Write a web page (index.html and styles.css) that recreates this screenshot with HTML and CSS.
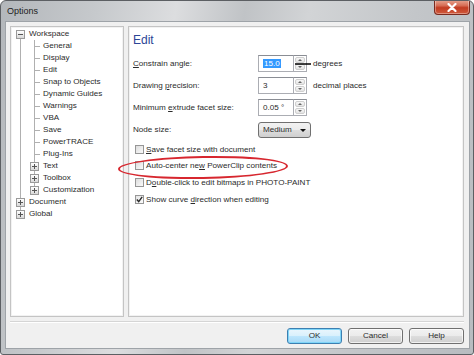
FILE: index.html
```html
<!DOCTYPE html>
<html lang="en">
<head>
    <meta charset="UTF-8">
    <title>Options</title>
    <link rel="stylesheet" href="styles.css">
</head>
<body>
<div class="window">
    <div class="titlebar">
        <span class="title">Options</span>
        <div class="close">
            <svg width="10" height="9" viewBox="0 0 10 9"><path d="M1.5 1 L8.5 8 M8.5 1 L1.5 8" stroke="#fff" stroke-width="2.2" stroke-linecap="round"/></svg>
        </div>
    </div>
    <div class="client">
        <div class="panes">
            <div class="tree">
                <div class="row"><span class="cell down"><i class="box minus"></i></span><span class="label">Workspace</span></div>
                <div class="row"><span class="cell line"></span><span class="cell tee"></span><span class="label">General</span></div>
                <div class="row"><span class="cell line"></span><span class="cell tee"></span><span class="label">Display</span></div>
                <div class="row"><span class="cell line"></span><span class="cell tee"></span><span class="label">Edit</span></div>
                <div class="row"><span class="cell line"></span><span class="cell tee"></span><span class="label">Snap to Objects</span></div>
                <div class="row"><span class="cell line"></span><span class="cell tee"></span><span class="label">Dynamic Guides</span></div>
                <div class="row"><span class="cell line"></span><span class="cell tee"></span><span class="label">Warnings</span></div>
                <div class="row"><span class="cell line"></span><span class="cell tee"></span><span class="label">VBA</span></div>
                <div class="row"><span class="cell line"></span><span class="cell tee"></span><span class="label">Save</span></div>
                <div class="row"><span class="cell line"></span><span class="cell tee"></span><span class="label">PowerTRACE</span></div>
                <div class="row"><span class="cell line"></span><span class="cell tee"></span><span class="label">Plug-Ins</span></div>
                <div class="row"><span class="cell line"></span><span class="cell line"><i class="box plus"></i></span><span class="label">Text</span></div>
                <div class="row"><span class="cell line"></span><span class="cell line"><i class="box plus"></i></span><span class="label">Toolbox</span></div>
                <div class="row"><span class="cell line"></span><span class="cell up"><i class="box plus"></i></span><span class="label">Customization</span></div>
                <div class="row"><span class="cell line"><i class="box plus"></i></span><span class="label">Document</span></div>
                <div class="row"><span class="cell up"><i class="box plus"></i></span><span class="label">Global</span></div>
            </div>
            <div class="page">
                <h1>Edit</h1>
                <div class="fields">
                    <span><u>C</u>onstrain angle:</span>
                    <div class="ctrl">
                        <div class="spin">
                            <div class="field"><span class="selected">15.0</span></div>
                            <div class="arrows"><span class="up"></span><span class="down"></span></div>
                        </div>
                        <span class="unit">degrees</span>
                    </div>
                    <span>Drawing <u>p</u>recision:</span>
                    <div class="ctrl">
                        <div class="spin">
                            <div class="field">3</div>
                            <div class="arrows"><span class="up"></span><span class="down"></span></div>
                        </div>
                        <span class="unit">decimal places</span>
                    </div>
                    <span>Minimum <u>e</u>xtrude facet size:</span>
                    <div class="ctrl">
                        <div class="spin">
                            <div class="field">0.05 °</div>
                            <div class="arrows"><span class="up"></span><span class="down"></span></div>
                        </div>
                    </div>
                    <span>Node size:</span>
                    <div class="ctrl">
                        <div class="select">Medium<span class="caret"></span></div>
                    </div>
                </div>
                <div class="checks">
                    <div class="check"><span class="cb"></span><span><u>S</u>ave facet size with document</span></div>
                    <div class="check"><span class="cb"></span><span>Auto-center ne<u>w</u> PowerClip contents</span></div>
                    <div class="check"><span class="cb"></span><span>D<u>o</u>uble-click to edit bitmaps in PHOTO-PAINT</span></div>
                    <div class="check"><span class="cb checked"><svg width="7" height="7" viewBox="0 0 7 7"><path d="M0.8 3.6 L2.7 5.6 L6.2 0.8" fill="none" stroke="#2a2a2a" stroke-width="1.4"/></svg></span><span>Show curve <u>d</u>irection when editing</span></div>
                </div>
                <div class="ellipse"></div>
                <svg class="cursor" width="18" height="4" viewBox="0 0 18 4">
                    <path d="M1 2 H17" stroke="#000" stroke-width="1.6"/>
                </svg>
            </div>
        </div>
        <div class="sep"></div>
        <div class="buttons">
            <div class="btn default">OK</div>
            <div class="btn">Cancel</div>
            <div class="btn">Help</div>
        </div>
    </div>
</div>
</body>
</html>
```

FILE: styles.css
```css
body {
    margin: 0;
    font-family: "Liberation Sans", Arial, sans-serif;
    font-size: 8.1px;
    color: #2b2b2b;
    background: #fff;
}
.window {
    width: 474px;
    height: 355px;
    box-sizing: border-box;
    border: 1px solid #5c5f63;
    border-radius: 6px 6px 3px 3px;
    background: linear-gradient(100deg, #b3b7bb 0%, #c6c9cc 18%, #dcdddf 33%, #c0c3c6 46%, #d2d4d6 58%, #c3c6c9 78%, #b8bcc0 100%);
    display: flex;
    flex-direction: column;
    overflow: hidden;
}
.titlebar {
    height: 21px;
    flex-shrink: 0;
    display: flex;
    justify-content: space-between;
    align-items: flex-start;
    padding-left: 6px;
}
.title {
    font-size: 9px;
    line-height: 20px;
    color: #1c1c1c;
}
.close {
    width: 36px;
    height: 15px;
    margin: -1px 3px 0 0;
    box-sizing: border-box;
    border: 1px solid #7a2a1e;
    border-top: none;
    border-radius: 0 0 4px 4px;
    background: linear-gradient(#e7a793 0%, #d66d55 40%, #c23c22 55%, #cf5a3c 100%);
    box-shadow: inset 0 0 0 1px rgba(255,255,255,0.35);
    display: flex;
    justify-content: center;
    align-items: center;
}
.client {
    flex: 1;
    margin: 0 4px 6px 5px;
    padding: 4px 5px 0 4px;
    background: #f0f0f0;
    box-shadow: 0 0 0 1px #9ea3a8;
    display: flex;
    flex-direction: column;
}
.panes {
    height: 291px;
    display: flex;
    gap: 4px;
}
.tree {
    width: 114px;
    box-sizing: border-box;
    border: 1px solid #c4c4c4;
    box-shadow: inset 0 0 0 1px #f2f2f2;
    background: #fff;
    padding-top: 1px;
}
.row {
    display: flex;
    height: 12px;
    padding-left: 4px;
}
.label {
    line-height: 12px;
    white-space: nowrap;
}
.cell {
    width: 11px;
    height: 12px;
    margin-right: 3px;
    display: flex;
    align-items: center;
    padding-left: 1px;
    box-sizing: border-box;
    flex-shrink: 0;
}
.cell.line {
    background: linear-gradient(#b0b0b0, #b0b0b0) 5px 0 / 1px 100% no-repeat;
}
.cell.tee {
    background: linear-gradient(#b0b0b0, #b0b0b0) 5px 0 / 1px 100% no-repeat,
                linear-gradient(#b0b0b0, #b0b0b0) 5px 6px / 6px 1px no-repeat;
}
.cell.down {
    background: linear-gradient(#b0b0b0, #b0b0b0) 5px 6px / 1px 6px no-repeat;
}
.cell.up {
    background: linear-gradient(#b0b0b0, #b0b0b0) 5px 0 / 1px 6px no-repeat;
}
.box {
    display: block;
    width: 7px;
    height: 7px;
    border: 1px solid #9a9a9a;
    background: linear-gradient(#555, #555) 1px 3px / 5px 1px no-repeat,
                linear-gradient(#ffffff, #d8d8d8);
}
.box.plus {
    background: linear-gradient(#555, #555) 1px 3px / 5px 1px no-repeat,
                linear-gradient(#555, #555) 3px 1px / 1px 5px no-repeat,
                linear-gradient(#ffffff, #d8d8d8);
}
.page {
    flex: 1;
    position: relative;
    box-sizing: border-box;
    border: 1px solid #c4c4c4;
    box-shadow: inset 0 0 0 1px #f2f2f2;
    background: #fff;
    padding: 0 4px;
}
.page h1 {
    margin: 5px 0 7px;
    font-size: 12px;
    line-height: 16px;
    font-weight: normal;
    color: #2c4596;
}
.fields {
    display: grid;
    grid-template-columns: 125px auto;
    grid-auto-rows: 17px;
    row-gap: 5px;
    align-items: center;
}
.ctrl {
    display: flex;
    align-items: center;
    height: 17px;
}
.spin {
    display: flex;
    height: 17px;
}
.field {
    width: 35px;
    box-sizing: border-box;
    border: 1px solid #abadb3;
    border-top-color: #8a8d94;
    border-right: none;
    padding-left: 4px;
    line-height: 15px;
}
.selected {
    background: #3399ff;
    color: #fff;
    padding: 0 1px;
}
.arrows {
    width: 14px;
    display: flex;
    flex-direction: column;
    border: 1px solid #abadb3;
    border-top-color: #8a8d94;
    box-sizing: border-box;
    padding: 1px;
    gap: 1px;
}
.arrows span {
    flex: 1;
    border: 1px solid #cfcfcf;
    border-radius: 2px;
    background: linear-gradient(#f7f7f7, #e4e4e4);
    display: flex;
    justify-content: center;
    align-items: center;
}
.arrows span::after {
    content: "";
    border-left: 2px solid transparent;
    border-right: 2px solid transparent;
}
.arrows .up::after {
    border-bottom: 2px solid #666;
}
.arrows .down::after {
    border-top: 2px solid #666;
}
.unit {
    margin-left: 6px;
}
.select {
    width: 53px;
    height: 16px;
    margin-top: 1px;
    box-sizing: border-box;
    border: 1px solid #707070;
    border-radius: 3px;
    background: linear-gradient(#f2f2f2 0%, #ebebeb 50%, #dddddd 51%, #cfcfcf 100%);
    padding: 0 4px;
    line-height: 14px;
    display: flex;
    justify-content: space-between;
    align-items: center;
}
.caret {
    border-left: 3px solid transparent;
    border-right: 3px solid transparent;
    border-top: 3px solid #111;
}
.checks {
    margin-top: 3px;
}
.check {
    display: flex;
    align-items: center;
    height: 16.6px;
    padding-left: 2px;
    white-space: nowrap;
}
.cb {
    width: 9px;
    height: 9px;
    box-sizing: border-box;
    border: 1px solid #969696;
    background: linear-gradient(135deg, #dcdcdc, #fbfbfb);
    margin-right: 2px;
    display: flex;
    justify-content: center;
    align-items: center;
}
.cb.checked {
    background: linear-gradient(135deg, #e4e4e4, #fdfdfd);
}
.ellipse {
    position: absolute;
    left: -11px;
    top: 129px;
    width: 170px;
    height: 23px;
    box-sizing: border-box;
    border: 2px solid #d7272f;
    border-radius: 50%;
    transform: rotate(-1deg);
}
.cursor {
    position: absolute;
    left: 165px;
    top: 35px;
}
.sep {
    margin-top: 4px;
    border-top: 1px solid #d5d5d5;
    border-bottom: 1px solid #fff;
}
.buttons {
    display: flex;
    justify-content: flex-end;
    gap: 6px;
    margin-top: 5px;
}
.btn {
    width: 55px;
    height: 16px;
    box-sizing: border-box;
    border: 1px solid #707070;
    border-radius: 3px;
    background: linear-gradient(#f2f2f2 0%, #ebebeb 50%, #dddddd 51%, #cfcfcf 100%);
    box-shadow: inset 0 0 0 1px rgba(255,255,255,0.7);
    text-align: center;
    line-height: 14px;
}
.btn.default {
    border-color: #3c7fb1;
    background: linear-gradient(#eaf6fd 0%, #d9f0fc 50%, #bee6fd 51%, #a7d9f5 100%);
    box-shadow: inset 0 0 0 1px #7fd5f8;
}
```
